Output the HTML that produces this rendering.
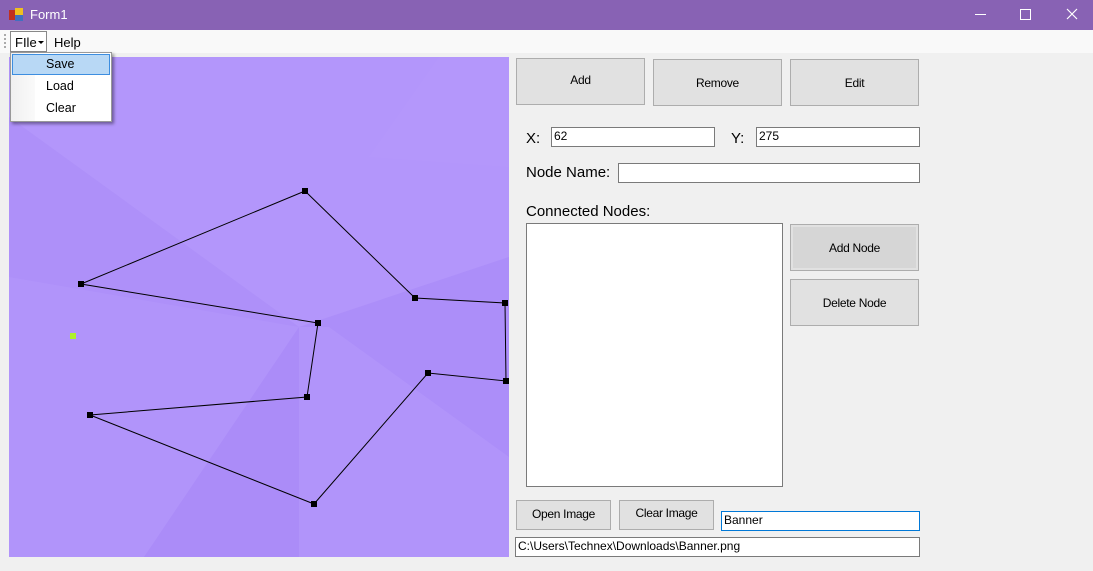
<!DOCTYPE html>
<html><head><style>
body{margin:0;width:1093px;height:571px;background:#f0f0f0;font-family:"Liberation Sans",sans-serif;position:relative;overflow:hidden;font-size:12px;color:#000}
.a{position:absolute}
.btn{position:absolute;background:#e1e1e1;border:1px solid #adadad;box-sizing:border-box;display:flex;align-items:center;justify-content:center;font-size:12px;letter-spacing:-0.3px}
.tb{position:absolute;background:#fff;border:1px solid #7a7a7a;box-sizing:border-box;font-size:12px;padding:1px 2px;line-height:15px}
.lbl{position:absolute;font-size:15px}
</style></head><body>
<div class="a" style="left:0;top:0;width:1093px;height:30px;background:#8862b4"></div>
<svg class="a" style="left:9px;top:7px" width="16" height="16"><rect x="0" y="3" width="7" height="10" fill="#c03020"/><rect x="6" y="1" width="8" height="8" fill="#f0c020"/><rect x="6" y="8" width="8" height="6" fill="#4070c0"/></svg>
<div class="a" style="left:30px;top:7px;color:#fff;font-size:13px">Form1</div>
<div class="a" style="left:975px;top:14px;width:11px;height:1px;background:#fff"></div>
<div class="a" style="left:1020px;top:9px;width:9px;height:9px;border:1px solid #fff"></div>
<svg class="a" style="left:1066px;top:8px" width="12" height="12"><path d="M1 1L11 11M11 1L1 11" stroke="#fff" stroke-width="1.2"/></svg>
<div class="a" style="left:0;top:30px;width:1093px;height:23px;background:#f9f9f9"></div>
<div class="a" style="left:4px;top:34px;width:2px;height:16px;background-image:linear-gradient(#aaa 50%,transparent 50%);background-size:2px 4px"></div>
<div class="a" style="left:10px;top:31px;width:37px;height:21px;border:1px solid #888;box-sizing:border-box;background:#fff"></div>
<div class="a" style="left:15px;top:35px;font-size:13px">FIle</div>
<div class="a" style="left:38px;top:41px;border-left:3px solid transparent;border-right:3px solid transparent;border-top:3px solid #000"></div>
<div class="a" style="left:54px;top:35px;font-size:13px">Help</div>
<svg class="a" style="left:9px;top:57px" width="500" height="500">
<rect width="500" height="500" fill="#b194fa"/>
<polygon points="0,0 500,0 500,110 360,100 430,0" fill="#b597fb"/>
<polygon points="0,60 290,270 500,200 500,0 0,0" fill="#b497fb" opacity="0.7"/>
<polygon points="290,270 500,200 500,400 320,270" fill="#ac8ef9"/>
<polygon points="290,270 290,500 135,500" fill="#ab8cf8"/>
<polygon points="0,60 290,270 0,220" fill="#ae90f9"/>
<g stroke="#000" stroke-width="1" fill="none">
<path d="M72,227L296,134L406,241L496,246L497,324L419,316L305,447L81,358L298,340L309,266Z"/>
</g>
<g fill="#000">
<rect x="293" y="131" width="6" height="6"/><rect x="69" y="224" width="6" height="6"/><rect x="403" y="238" width="6" height="6"/><rect x="493" y="243" width="6" height="6"/><rect x="306" y="263" width="6" height="6"/><rect x="295" y="337" width="6" height="6"/><rect x="416" y="313" width="6" height="6"/><rect x="494" y="321" width="6" height="6"/><rect x="78" y="355" width="6" height="6"/><rect x="302" y="444" width="6" height="6"/>
</g>
<rect x="61" y="276" width="6" height="6" fill="#aef02a"/>
</svg>
<div class="a" style="left:10px;top:52px;width:102px;height:70px;background:#fff;border:1px solid #999;box-sizing:border-box;box-shadow:2px 2px 3px rgba(0,0,0,0.4)"></div>
<div class="a" style="left:11px;top:53px;width:24px;height:68px;background:linear-gradient(90deg,#f0f0f0,#fafafa)"></div>
<div class="a" style="left:12px;top:54px;width:98px;height:21px;background:#b8d8f5;border:1px solid #3d8ee0;box-sizing:border-box"></div>
<div class="a" style="left:46px;top:57px;font-size:12.5px">Save</div>
<div class="a" style="left:46px;top:79px;font-size:12.5px">Load</div>
<div class="a" style="left:46px;top:101px;font-size:12.5px">Clear</div>
<div class="btn" style="left:516px;top:58px;width:129px;height:47px;padding-bottom:4px">Add</div>
<div class="btn" style="left:653px;top:59px;width:129px;height:47px">Remove</div>
<div class="btn" style="left:790px;top:59px;width:129px;height:47px">Edit</div>
<div class="lbl" style="left:526px;top:130px">X:</div>
<div class="tb" style="left:551px;top:127px;width:164px;height:20px">62</div>
<div class="lbl" style="left:731px;top:130px">Y:</div>
<div class="tb" style="left:756px;top:127px;width:164px;height:20px">275</div>
<div class="lbl" style="left:526px;top:164px">Node Name:</div>
<div class="tb" style="left:618px;top:163px;width:302px;height:20px"></div>
<div class="lbl" style="left:526px;top:203px">Connected Nodes:</div>
<div class="tb" style="left:526px;top:223px;width:257px;height:264px"></div>
<div class="btn" style="left:790px;top:224px;width:129px;height:47px;background:#d6d6d6;box-shadow:inset 0 0 0 2px #e1e1e1">Add Node</div>
<div class="btn" style="left:790px;top:279px;width:129px;height:47px">Delete Node</div>
<div class="btn" style="left:516px;top:500px;width:95px;height:30px;padding-bottom:2px">Open Image</div>
<div class="btn" style="left:619px;top:500px;width:95px;height:30px;padding-bottom:4px">Clear Image</div>
<div class="tb" style="left:721px;top:511px;width:199px;height:20px;border-color:#0078d7">Banner</div>
<div class="tb" style="left:515px;top:537px;width:405px;height:20px">C:\Users\Technex\Downloads\Banner.png</div>
</body></html>
